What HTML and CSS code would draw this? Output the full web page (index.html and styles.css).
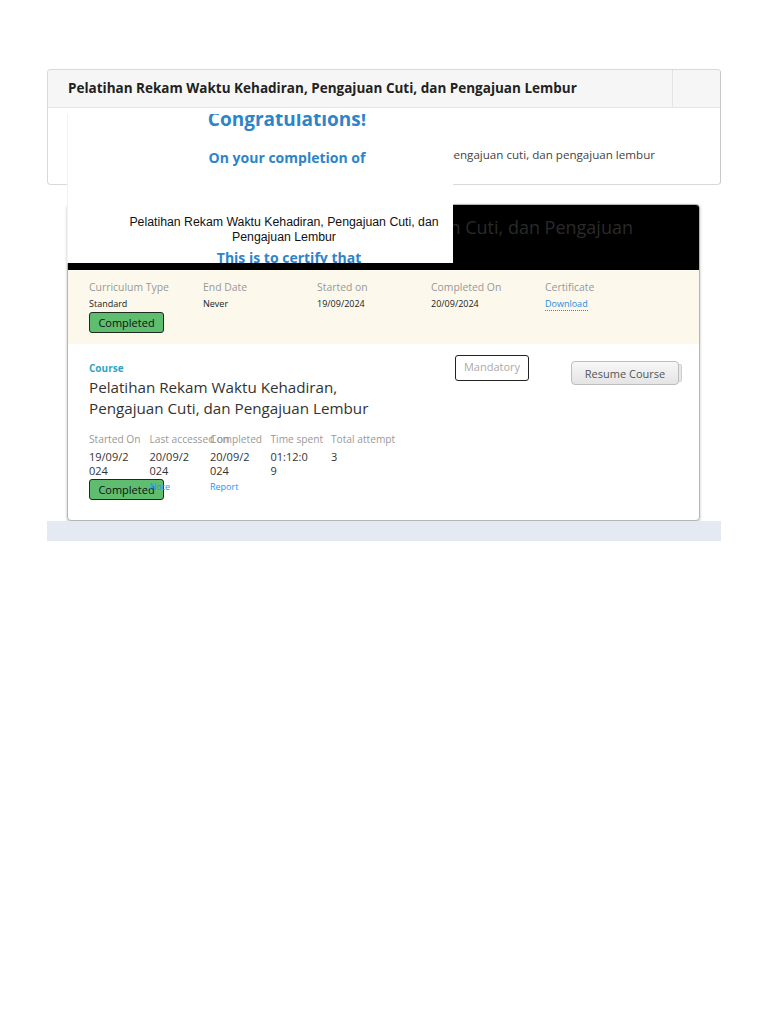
FILE: index.html
```html
<!DOCTYPE html>
<html lang="id">
<head>
<meta charset="utf-8">
<title>Pelatihan Rekam Waktu Kehadiran</title>
<link rel="stylesheet" href="styles.css">
</head>
<body>
<div class="page">
  <div class="top-card">
    <div class="top-head">
      <div class="top-title">Pelatihan Rekam Waktu Kehadiran, Pengajuan Cuti, dan Pengajuan Lembur</div>
      <div class="top-side"></div>
    </div>
    <div class="top-body">Pelatihan rekam waktu kehadiran, pengajuan cuti, dan pengajuan lembur</div>
  </div>

  <div class="cert-overlay">
    <div class="cert-inner">
      <div class="cert-congrats">Congratulations!</div>
      <div class="cert-sub">On your completion of</div>
      <div class="cert-course">Pelatihan Rekam Waktu Kehadiran, Pengajuan Cuti, dan<br>Pengajuan Lembur</div>
      <div class="cert-certify">This is to certify that</div>
    </div>
  </div>

  <div class="card">
    <div class="card-hero">
      <span class="hero-title">Pelatihan Rekam Waktu Kehadiran, Pengajuan Cuti, dan Pengajuan</span>
    </div>
    <div class="info">
      <div class="info-col">
        <div class="info-label">Curriculum Type</div>
        <div class="info-value">Standard</div>
        <span class="badge">Completed</span>
      </div>
      <div class="info-col">
        <div class="info-label">End Date</div>
        <div class="info-value">Never</div>
      </div>
      <div class="info-col">
        <div class="info-label">Started on</div>
        <div class="info-value">19/09/2024</div>
      </div>
      <div class="info-col">
        <div class="info-label">Completed On</div>
        <div class="info-value">20/09/2024</div>
      </div>
      <div class="info-col">
        <div class="info-label">Certificate</div>
        <div class="info-value"><a class="dl-link">Download</a></div>
      </div>
    </div>
    <div class="course">
      <div class="course-main">
        <div class="course-kind">Course</div>
        <div class="course-title">Pelatihan Rekam Waktu Kehadiran, Pengajuan Cuti, dan Pengajuan Lembur</div>
        <div class="stats">
          <div class="stat">
            <div class="stat-label">Started On</div>
            <div class="stat-value">19/09/2024</div>
            <span class="badge">Completed</span>
          </div>
          <div class="stat">
            <div class="stat-label">Last accessed on</div>
            <div class="stat-value">20/09/2024</div>
            <a class="stat-link">Note</a>
          </div>
          <div class="stat">
            <div class="stat-label">Completed</div>
            <div class="stat-value">20/09/2024</div>
            <a class="stat-link">Report</a>
          </div>
          <div class="stat">
            <div class="stat-label">Time spent</div>
            <div class="stat-value">01:12:09</div>
          </div>
          <div class="stat">
            <div class="stat-label">Total attempt</div>
            <div class="stat-value">3</div>
          </div>
        </div>
      </div>
      <div class="mandatory">Mandatory</div>
      <div class="resume-wrap">
        <button class="resume">Resume Course</button><span class="resume-edge"></span>
      </div>
    </div>
  </div>
  <div class="band"></div>
</div>
</body>
</html>
```

FILE: styles.css
```css
* { box-sizing: border-box; }
body {
  margin: 0;
  background: #fff;
  font-family: "Open Sans", "Noto Sans", "DejaVu Sans", sans-serif;
  color: #333;
}
.page {
  position: relative;
  width: 674px;
  margin-left: 47px;
  padding-top: 69px;
}
.top-card {
  height: 116px;
  border: 1px solid #d9d9d9;
  border-right-color: #c8c8c8;
  border-radius: 4px;
  overflow: hidden;
}
.top-head {
  display: flex;
  height: 38px;
  background: #f6f6f6;
  border-bottom: 1px solid #e6e6e6;
}
.top-title {
  flex: 1;
  padding-left: 20px;
  font-size: 13.5px;
  font-weight: 700;
  color: #222;
  line-height: 37px;
  white-space: nowrap;
}
.top-side {
  width: 48px;
  flex-shrink: 0;
  border-left: 1px solid #e4e4e4;
}
.top-body {
  padding-top: 39px;
  padding-right: 65px;
  text-align: right;
  white-space: nowrap;
  font-size: 11.6px;
  line-height: 16px;
  color: #444;
}
.cert-overlay {
  position: absolute;
  left: 20px;
  top: 114px;
  width: 386px;
  height: 149px;
  background: #fff;
  overflow: hidden;
  z-index: 2;
  border-left: 1px solid #f2f2f2;
}
.cert-inner {
  width: 438px;
  text-align: center;
}
.cert-congrats {
  margin-top: -6px;
  font-size: 19px;
  line-height: 22px;
  font-weight: 700;
  color: #2d84c8;
}
.cert-sub {
  margin-top: 19px;
  font-size: 14px;
  line-height: 18px;
  font-weight: 700;
  color: #2d84c8;
}
.cert-course {
  margin-top: 48px;
  padding-right: 6px;
  font-family: "Liberation Sans", Arial, sans-serif;
  font-size: 12.3px;
  line-height: 15px;
  color: #111;
}
.cert-certify {
  margin-top: 4px;
  padding-left: 4px;
  font-size: 14px;
  line-height: 18px;
  font-weight: 700;
  color: #2d84c8;
}
.card {
  width: 633px;
  margin-top: 19px;
  margin-left: 20px;
  border: 1px solid #b5b5b5;
  border-radius: 4px;
  box-shadow: 0 1px 3px rgba(0,0,0,0.25);
  overflow: hidden;
  background: #fff;
}
.card-hero {
  height: 65px;
  background: #000;
  display: flex;
  justify-content: flex-end;
  padding-top: 11px;
  padding-right: 66px;
  overflow: hidden;
}
.hero-title {
  white-space: nowrap;
  font-size: 18px;
  line-height: 22px;
  color: #2a2a2a;
}
.info {
  display: flex;
  background: #fcf8ec;
  padding: 10px 0 11px 21px;
}
.info-col {
  width: 114px;
  display: flex;
  flex-direction: column;
  align-items: flex-start;
}
.info-label {
  font-size: 10.4px;
  line-height: 14px;
  color: #999;
}
.info-value {
  margin-top: 3px;
  font-size: 9px;
  line-height: 14px;
  color: #222;
}
.dl-link {
  color: #1f8de0;
  border-bottom: 1px dotted #1f8de0;
}
.badge {
  display: inline-block;
  width: 75px;
  height: 21px;
  margin-top: 1px;
  background: #5fbd6f;
  border: 1px solid #1e2a1e;
  border-radius: 3px;
  font-size: 11px;
  line-height: 19px;
  text-align: center;
  color: #111;
  white-space: nowrap;
}
.course {
  display: flex;
  align-items: flex-start;
  padding: 11px 16px 20px 21px;
}
.course-main {
  width: 305px;
  flex-shrink: 0;
  padding-top: 6px;
}
.course-kind {
  font-size: 10px;
  line-height: 14px;
  font-weight: 700;
  color: #2ea5c4;
}
.course-title {
  margin-top: 2px;
  font-size: 15.2px;
  line-height: 21px;
  color: #333;
}
.stats {
  display: flex;
  margin-top: 13px;
}
.stat {
  width: 60.5px;
  flex-shrink: 0;
  display: flex;
  flex-direction: column;
  align-items: flex-start;
  padding-right: 18px;
}
.stat-label {
  white-space: nowrap;
  font-size: 10.2px;
  line-height: 14px;
  color: #999;
}
.stat-value {
  margin-top: 4px;
  font-size: 11px;
  line-height: 14px;
  color: #333;
  word-break: break-all;
}
.stat-link {
  position: relative;
  margin-top: 2px;
  font-size: 9px;
  line-height: 14px;
  color: #2196f3;
}
.mandatory {
  flex-shrink: 0;
  margin-left: 61px;
  width: 74px;
  height: 26px;
  border: 1px solid #222;
  border-radius: 3px;
  font-size: 11px;
  line-height: 22px;
  text-align: center;
  color: #aaa;
}
.resume-wrap {
  flex-shrink: 0;
  display: flex;
  align-items: center;
  margin-left: 42px;
  margin-top: 6px;
}
.resume {
  width: 108px;
  height: 24px;
  padding: 0;
  border: 1px solid #bdbdbd;
  border-radius: 4px;
  background: linear-gradient(#f7f7f7, #e4e4e4);
  font-family: "Open Sans", "Noto Sans", sans-serif;
  font-size: 11px;
  color: #555;
}
.resume-edge {
  width: 3px;
  height: 18px;
  background: #e6e6e6;
  border: 1px solid #cfcfcf;
  border-left: none;
  border-radius: 0 2px 2px 0;
}
.band {
  height: 20px;
  background: #e4e9f2;
}
```
